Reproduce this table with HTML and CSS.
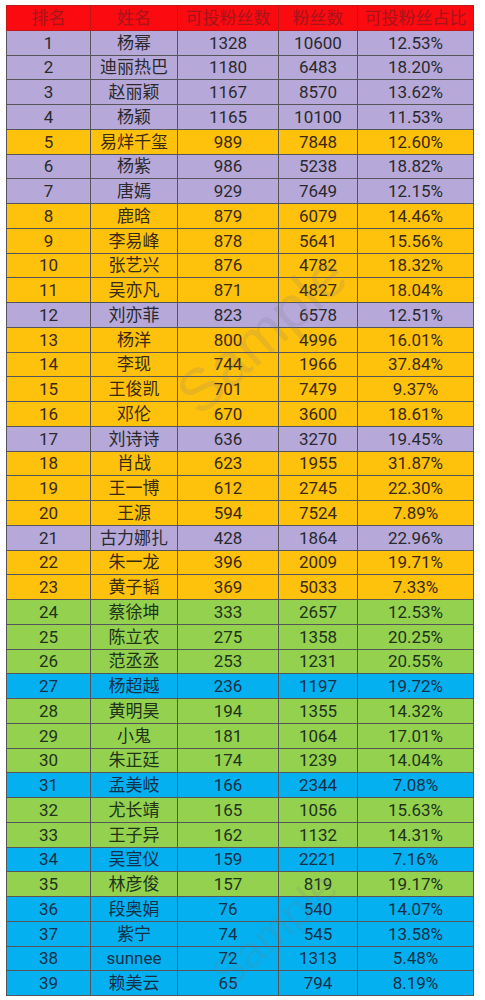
FILE: index.html
```html
<!DOCTYPE html>
<html lang="zh-CN">
<head>
    <meta charset="UTF-8">
    <meta name="viewport" content="width=device-width, initial-scale=1.0">
    <title>可投粉丝占比</title>
    <link rel="stylesheet" href="styles.css">
</head>
<body>
    <div class="sheet">
        <table class="rank-table">
            <colgroup>
                <col class="c-rank">
                <col class="c-name">
                <col class="c-vote">
                <col class="c-fans">
                <col class="c-ratio">
            </colgroup>
            <thead>
                <tr>
                    <th>排名</th>
                    <th>姓名</th>
                    <th>可投粉丝数</th>
                    <th>粉丝数</th>
                    <th>可投粉丝占比</th>
                </tr>
            </thead>
            <tbody id="rank-body">
                <!-- rows are filled in below -->
            </tbody>
        </table>
        <div class="watermark mark-1">Sample</div>
        <div class="watermark mark-2">Sample</div>
    </div>

    <script>
        const rows = [
            ["杨幂", 1328, 10600, "12.53%", "purple"],
            ["迪丽热巴", 1180, 6483, "18.20%", "purple"],
            ["赵丽颖", 1167, 8570, "13.62%", "purple"],
            ["杨颖", 1165, 10100, "11.53%", "purple"],
            ["易烊千玺", 989, 7848, "12.60%", "orange"],
            ["杨紫", 986, 5238, "18.82%", "purple"],
            ["唐嫣", 929, 7649, "12.15%", "purple"],
            ["鹿晗", 879, 6079, "14.46%", "orange"],
            ["李易峰", 878, 5641, "15.56%", "orange"],
            ["张艺兴", 876, 4782, "18.32%", "orange"],
            ["吴亦凡", 871, 4827, "18.04%", "orange"],
            ["刘亦菲", 823, 6578, "12.51%", "purple"],
            ["杨洋", 800, 4996, "16.01%", "orange"],
            ["李现", 744, 1966, "37.84%", "orange"],
            ["王俊凯", 701, 7479, "9.37%", "orange"],
            ["邓伦", 670, 3600, "18.61%", "orange"],
            ["刘诗诗", 636, 3270, "19.45%", "purple"],
            ["肖战", 623, 1955, "31.87%", "orange"],
            ["王一博", 612, 2745, "22.30%", "orange"],
            ["王源", 594, 7524, "7.89%", "orange"],
            ["古力娜扎", 428, 1864, "22.96%", "purple"],
            ["朱一龙", 396, 2009, "19.71%", "orange"],
            ["黄子韬", 369, 5033, "7.33%", "orange"],
            ["蔡徐坤", 333, 2657, "12.53%", "green"],
            ["陈立农", 275, 1358, "20.25%", "green"],
            ["范丞丞", 253, 1231, "20.55%", "green"],
            ["杨超越", 236, 1197, "19.72%", "blue"],
            ["黄明昊", 194, 1355, "14.32%", "green"],
            ["小鬼", 181, 1064, "17.01%", "green"],
            ["朱正廷", 174, 1239, "14.04%", "green"],
            ["孟美岐", 166, 2344, "7.08%", "blue"],
            ["尤长靖", 165, 1056, "15.63%", "green"],
            ["王子异", 162, 1132, "14.31%", "green"],
            ["吴宣仪", 159, 2221, "7.16%", "blue"],
            ["林彦俊", 157, 819, "19.17%", "green"],
            ["段奥娟", 76, 540, "14.07%", "blue"],
            ["紫宁", 74, 545, "13.58%", "blue"],
            ["sunnee", 72, 1313, "5.48%", "blue"],
            ["赖美云", 65, 794, "8.19%", "blue"]
        ];

        let body = document.getElementById("rank-body");
        rows.forEach((row, index) => {
            body.innerHTML += `
                <tr class="${row[4]}">
                    <td>${index + 1}</td>
                    <td>${row[0]}</td>
                    <td>${row[1]}</td>
                    <td>${row[2]}</td>
                    <td>${row[3]}</td>
                </tr>
            `;
        });
    </script>
</body>
</html>
```

FILE: styles.css
```css
body {
    margin: 0;
    padding: 0;
    background-color: #ffffff;
    font-family: Roboto, "Noto Sans CJK SC", sans-serif;
}

.sheet {
    position: relative;
    padding: 5px 12px 5px 6px;
    overflow: hidden;
}

.rank-table {
    width: 467px;
    border-collapse: collapse;
    table-layout: fixed;
    border: 1px solid #6b6b6b;
}

.c-rank { width: 84px; }
.c-name { width: 87px; }
.c-vote { width: 101px; }
.c-fans { width: 79px; }
.c-ratio { width: 116px; }

.rank-table th,
.rank-table td {
    height: 23.75px;
    padding: 0;
    border: 1px solid #55555a;
    text-align: center;
    font-size: 17px;
    line-height: 20px;
    font-weight: normal;
    color: #2a2a2e;
    white-space: nowrap;
}

.rank-table th {
    background-color: #fb0a0f;
    color: #a8141c;
    border-color: #c01818;
}

.rank-table tr.purple td {
    background-color: #b6a8d8;
}

.rank-table tr.orange td {
    background-color: #fec10c;
    color: #3a2a10;
}

.rank-table tr.green td {
    background-color: #93d14f;
    color: #21331a;
}

.rank-table tr.blue td {
    background-color: #04b0ef;
    color: #13304a;
}

.watermark {
    position: absolute;
    font-family: "Liberation Sans", Arial, sans-serif;
    font-size: 60px;
    color: rgba(120, 120, 140, 0.16);
    transform: rotate(-42deg);
    pointer-events: none;
}

.mark-1 {
    left: 160px;
    top: 300px;
}

.mark-2 {
    left: 200px;
    top: 905px;
    font-size: 44px;
}
```
